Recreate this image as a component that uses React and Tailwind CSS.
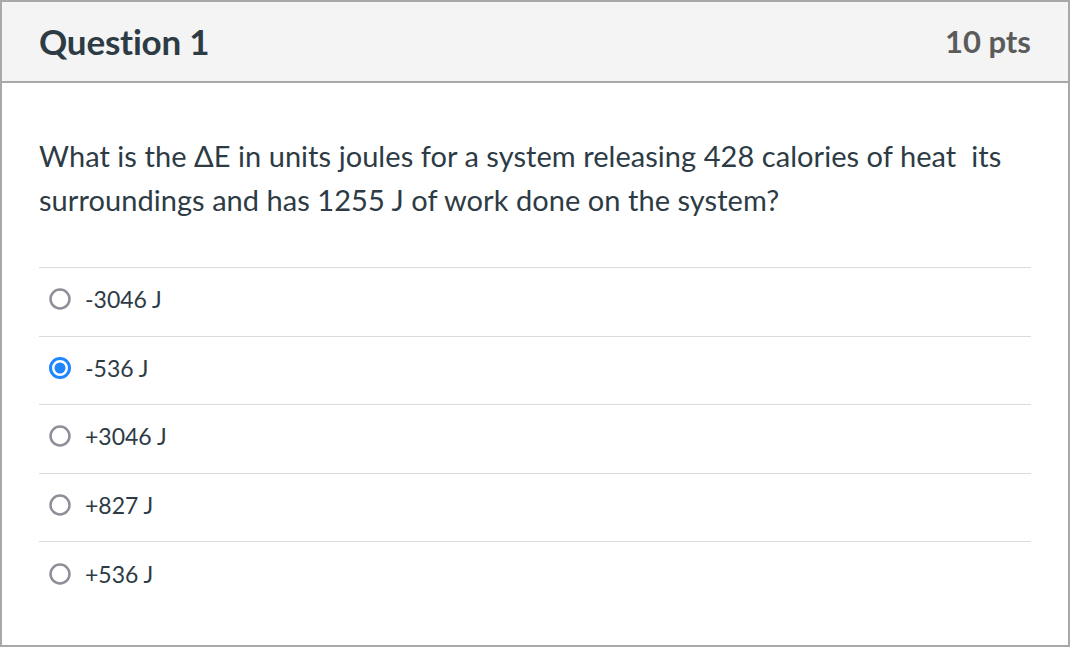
import React from "react";

const answers = [
  { label: "-3046 J", checked: false },
  { label: "-536 J", checked: true },
  { label: "+3046 J", checked: false },
  { label: "+827 J", checked: false },
  { label: "+536 J", checked: false },
];

function Radio({ checked }) {
  return (
    <svg width="24" height="24" viewBox="0 0 24 24" className="shrink-0">
      {checked ? (
        <>
          <circle cx="12" cy="12" r="9.5" fill="none" stroke="#1f86ff" strokeWidth="3" />
          <circle cx="12" cy="12" r="5.5" fill="#1f86ff" />
        </>
      ) : (
        <circle cx="12" cy="12" r="9.5" fill="none" stroke="#8f8e99" strokeWidth="2.5" />
      )}
    </svg>
  );
}

export default function App() {
  return (
    <div className="w-[1072px] h-[650px] bg-white" style={{ fontFamily: "Lato, 'Open Sans', sans-serif" }}>
      <div className="w-[1070px] h-[647px] border-2 border-[#a8a8a8] flex flex-col">
        <div className="h-[81px] bg-[#f4f4f4] border-b-2 border-[#a8a8a8] flex items-center justify-between pl-[37px] pr-[37px]">
          <div className="text-[35px] font-bold text-[#2d3b45] tracking-[-0.2px]">Question 1</div>
          <div className="text-[31px] font-bold text-[#5b5b5b]">10 pts</div>
        </div>
        <div className="px-[37px] pt-[51px]">
          <div className="text-[29px] tracking-[0.05px] leading-[44px] text-[#2d3b45]">
            What is the ΔE in units joules for a system releasing 428 calories of heat&nbsp; its surroundings and has 1255 J of work done on the system?
          </div>
          <div className="mt-[45px] border-t border-[#dcdcdc]">
            {answers.map((a, i) => (
              <div
                key={i}
                className={`h-[68.5px] flex items-center gap-[13px] pl-[9px] pb-[5px] ${i < answers.length - 1 ? "border-b border-[#dcdcdc]" : ""}`}
              >
                <Radio checked={a.checked} />
                <span className="text-[23px] text-[#2d3b45]">{a.label}</span>
              </div>
            ))}
          </div>
        </div>
      </div>
    </div>
  );
}
